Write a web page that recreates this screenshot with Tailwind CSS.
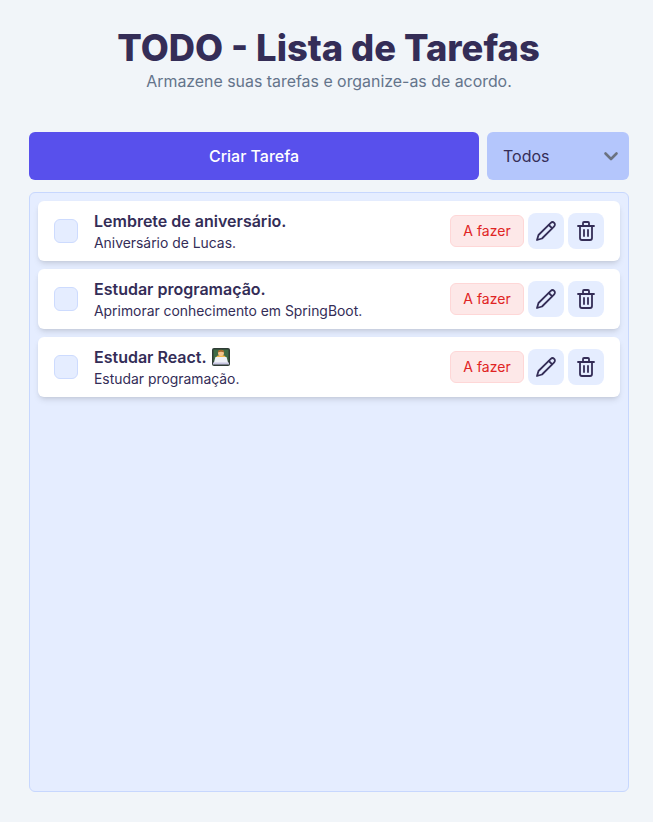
<!DOCTYPE html>
<html lang="pt-BR">
<head>
  <meta charset="UTF-8" />
  <meta name="viewport" content="width=device-width, initial-scale=1.0" />
  <title>TODO - Lista de Tarefas</title>
  <script src="https://cdn.jsdelivr.net/npm/@tailwindcss/browser@4"></script>
</head>
<body class="min-h-screen bg-[#f1f5f9] font-[Inter,sans-serif] text-[#342d57]">
  <main class="pl-[29px] pr-[24px] pt-[24px] w-[653px] mx-auto">
    <!-- Header -->
    <header class="text-center">
      <h1 class="text-[36.35px] leading-[48px] font-extrabold -translate-x-[0.5px]">TODO - Lista de Tarefas</h1>
      <p class="text-[15.9px] leading-[20px] text-[#64748b]">Armazene suas tarefas e organize-as de acordo.</p>
    </header>

    <!-- Actions -->
    <div class="mt-[40px] flex gap-2">
      <button class="h-[48px] w-[450px] rounded-md bg-[#5850ec] text-white font-medium text-[16px]">Criar Tarefa</button>
      <div class="h-[48px] flex-1 rounded-md bg-[#b4c6fc] pl-4 pr-[8px] flex items-center justify-between text-[16px]">
        <span>Todos</span>
        <svg class="w-5 h-5 text-[#6b7280]" viewBox="0 0 20 20" fill="none" stroke="currentColor" stroke-width="2.6" stroke-linecap="round" stroke-linejoin="round"><path d="M4.5 7.500 10 13l5.500-5.500"/></svg>
      </div>
    </div>

    <!-- List -->
    <section class="mt-3 h-[600px] rounded-md border border-[#c7d7fe] bg-[#e5edff] p-2 flex flex-col gap-2">

      <article class="h-[60px] rounded-md bg-white shadow-md pl-4 pr-4 flex items-center">
        <span class="w-6 h-6 rounded-md border border-[#cddbfe] bg-[#e5edff]"></span>
        <div class="ml-4 flex-1 pt-[2px]">
          <h2 class="text-[16px] leading-[20px] font-semibold">Lembrete de aniversário.</h2>
          <p class="mt-[2px] text-[13.9px] leading-[20px]">Aniversário de Lucas.</p>
        </div>
        <span class="h-[32px] w-[74px] pb-[2px] justify-center rounded-md border border-[#fed7d7] bg-[#fde8e8] text-[#e02424] text-[14px] flex items-center">A fazer</span>
        <button class="ml-1 w-9 h-9 rounded-lg bg-[#e5edff] flex items-center justify-center">
          <svg class="w-6 h-6" viewBox="0 0 24 24" fill="none" stroke="currentColor" stroke-width="1.8" stroke-linecap="round" stroke-linejoin="round"><path d="M16.800 3.900a2.400 2.400 0 0 1 3.400 3.400L8 19.500l-5 1.500 1.500-5z"/><path d="m14.800 6 3.200 3.200"/></svg>
        </button>
        <button class="ml-1 w-9 h-9 rounded-lg bg-[#e5edff] flex items-center justify-center">
          <svg class="w-6 h-6" viewBox="0 0 24 24" fill="none" stroke="currentColor" stroke-width="1.8" stroke-linecap="round" stroke-linejoin="round"><path d="M4 7h16"/><path d="M9 7V4a1 1 0 0 1 1-1h4a1 1 0 0 1 1 1v3"/><path d="M6 7v12a2 2 0 0 0 2 2h8a2 2 0 0 0 2-2V7"/><path d="M10 11v6"/><path d="M14 11v6"/></svg>
        </button>
      </article>

      <article class="h-[60px] rounded-md bg-white shadow-md pl-4 pr-4 flex items-center">
        <span class="w-6 h-6 rounded-md border border-[#cddbfe] bg-[#e5edff]"></span>
        <div class="ml-4 flex-1 pt-[2px]">
          <h2 class="text-[16px] leading-[20px] font-semibold">Estudar programação.</h2>
          <p class="mt-[2px] text-[13.9px] leading-[20px]">Aprimorar conhecimento em SpringBoot.</p>
        </div>
        <span class="h-[32px] w-[74px] pb-[2px] justify-center rounded-md border border-[#fed7d7] bg-[#fde8e8] text-[#e02424] text-[14px] flex items-center">A fazer</span>
        <button class="ml-1 w-9 h-9 rounded-lg bg-[#e5edff] flex items-center justify-center">
          <svg class="w-6 h-6" viewBox="0 0 24 24" fill="none" stroke="currentColor" stroke-width="1.8" stroke-linecap="round" stroke-linejoin="round"><path d="M16.800 3.900a2.400 2.400 0 0 1 3.400 3.400L8 19.500l-5 1.500 1.500-5z"/><path d="m14.800 6 3.200 3.200"/></svg>
        </button>
        <button class="ml-1 w-9 h-9 rounded-lg bg-[#e5edff] flex items-center justify-center">
          <svg class="w-6 h-6" viewBox="0 0 24 24" fill="none" stroke="currentColor" stroke-width="1.8" stroke-linecap="round" stroke-linejoin="round"><path d="M4 7h16"/><path d="M9 7V4a1 1 0 0 1 1-1h4a1 1 0 0 1 1 1v3"/><path d="M6 7v12a2 2 0 0 0 2 2h8a2 2 0 0 0 2-2V7"/><path d="M10 11v6"/><path d="M14 11v6"/></svg>
        </button>
      </article>

      <article class="h-[60px] rounded-md bg-white shadow-md pl-4 pr-4 flex items-center">
        <span class="w-6 h-6 rounded-md border border-[#cddbfe] bg-[#e5edff]"></span>
        <div class="ml-4 flex-1 pt-[2px]">
          <h2 class="text-[16px] leading-[20px] font-semibold flex items-center gap-[5px]">Estudar React.
            <svg class="w-[18px] h-[18px]" viewBox="0 0 18 18"><rect width="18" height="18" rx="2" fill="#2f3b35"/><rect x="1.500" y="1.500" width="15" height="12" fill="#3f6b45"/><path d="M4 10c0-2 2-3 5-3s5 1 5 3z" fill="#f2b84b"/><circle cx="9" cy="5" r="3" fill="#f5c38b"/><path d="M5.800 4.600c-.4-3.800 6.800-3.800 6.400 0-2-1.200-4.400-1.200-6.400 0z" fill="#a5682a"/><path d="M3.500 9h11l2 7h-15z" fill="#eef0f6"/><path d="M1 14.500h16V16.500H1z" fill="#c6c4e0"/></svg>
          </h2>
          <p class="mt-[2px] text-[13.9px] leading-[20px]">Estudar programação.</p>
        </div>
        <span class="h-[32px] w-[74px] pb-[2px] justify-center rounded-md border border-[#fed7d7] bg-[#fde8e8] text-[#e02424] text-[14px] flex items-center">A fazer</span>
        <button class="ml-1 w-9 h-9 rounded-lg bg-[#e5edff] flex items-center justify-center">
          <svg class="w-6 h-6" viewBox="0 0 24 24" fill="none" stroke="currentColor" stroke-width="1.8" stroke-linecap="round" stroke-linejoin="round"><path d="M16.800 3.900a2.400 2.400 0 0 1 3.400 3.400L8 19.500l-5 1.500 1.500-5z"/><path d="m14.800 6 3.200 3.200"/></svg>
        </button>
        <button class="ml-1 w-9 h-9 rounded-lg bg-[#e5edff] flex items-center justify-center">
          <svg class="w-6 h-6" viewBox="0 0 24 24" fill="none" stroke="currentColor" stroke-width="1.8" stroke-linecap="round" stroke-linejoin="round"><path d="M4 7h16"/><path d="M9 7V4a1 1 0 0 1 1-1h4a1 1 0 0 1 1 1v3"/><path d="M6 7v12a2 2 0 0 0 2 2h8a2 2 0 0 0 2-2V7"/><path d="M10 11v6"/><path d="M14 11v6"/></svg>
        </button>
      </article>
    </section>
  </main>
</body>
</html>
